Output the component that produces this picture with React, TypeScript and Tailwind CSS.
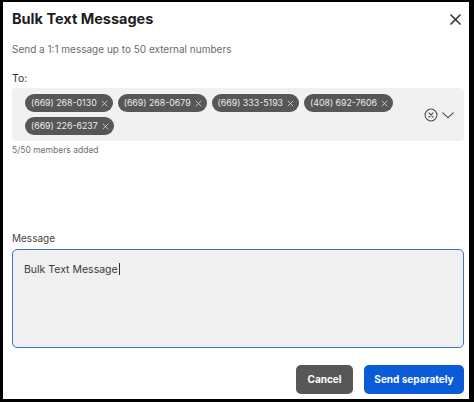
import React from "react";

const numbers = [
  "(669) 268-0130",
  "(669) 268-0679",
  "(669) 333-5193",
  "(408) 692-7606",
  "(669) 226-6237",
];

const Cross = ({ className }: { className?: string }) => (
  <svg className={className} viewBox="0 0 10 10" fill="none" stroke="currentColor" strokeWidth="1.2" strokeLinecap="round">
    <path d="M1.5 1.5l7 7M8.5 1.5l-7 7" />
  </svg>
);

const Chip = ({ label }: { label: string }) => (
  <span className="flex h-[18px] items-center gap-[4px] rounded-full bg-[#575757] pl-[6px] pr-[5px] text-[8.8px] leading-none text-[#ececec]">
    {label}
    <Cross className="size-[7px] text-[#d8d8d8]" />
  </span>
);

export default function App() {
  return (
    <div className="h-[402px] w-[474px] bg-black pb-[3px] pl-[3px] pr-[5px] pt-[2px] font-['Inter',sans-serif]">
      <div className="flex h-full w-full flex-col bg-white pl-[9px] pr-[5px] pt-[6px]">
        <div className="flex h-[22px] items-center justify-between">
          <h1 className="text-[14.5px] font-bold leading-[22px] text-[#1d1d1d]">Bulk Text Messages</h1>
          <Cross className="mr-[2px] size-[13px] text-[#333]" />
        </div>

        <p className="mt-[11px] text-[10px] leading-[16px] text-[#6b6b6b]">
          Send a 1:1 message up to 50 external numbers
        </p>

        <label className="mt-[14px] text-[10.5px] leading-[16px] text-[#333]">To:</label>
        <div className="mt-[1px] flex items-center rounded-[4px] bg-[#f1f1f1] py-[6px] pl-[13px] pr-[9px]">
          <div className="flex flex-1 flex-wrap gap-x-[5px] gap-y-[5px]">
            {numbers.map((n) => (
              <Chip key={n} label={n} />
            ))}
          </div>
          <div className="flex items-center gap-[3px] text-[#444]">
            <svg className="size-[14px]" viewBox="0 0 16 16" fill="none" stroke="currentColor" strokeWidth="1.2">
              <circle cx="8" cy="8" r="6.8" />
              <path d="M5.6 5.6l4.8 4.8M10.4 5.6l-4.8 4.8" strokeLinecap="round" />
            </svg>
            <svg className="size-[14px]" viewBox="0 0 16 16" fill="none" stroke="currentColor" strokeWidth="1.2" strokeLinecap="round" strokeLinejoin="round">
              <path d="M2 5.5l6 5.5 6-5.5" />
            </svg>
          </div>
        </div>
        <p className="mt-[3px] text-[8.5px] leading-[13px] text-[#707070]">5/50 members added</p>

        <label className="mt-[73px] text-[10px] leading-[16px] text-[#444]">Message</label>
        <div className="mt-[3px] h-[99px] rounded-[5px] border-[1.5px] border-[#3c72c6] bg-[#f0f0f0] px-[11px] pt-[5px]">
          <span className="text-[10.5px] leading-[16px] text-[#3a3a3a]">Bulk Text Message</span>
          <span className="ml-[1px] inline-block h-[12px] w-[1px] translate-y-[2px] bg-[#333]" />
        </div>

        <div className="mt-[17px] flex justify-end gap-[11px]">
          <button className="h-[29px] w-[57px] rounded-[5px] bg-[#575757] text-[10px] font-bold text-white">
            Cancel
          </button>
          <button className="h-[29px] w-[100px] rounded-[5px] bg-[#0b5bd9] text-[10px] font-bold text-white">
            Send separately
          </button>
        </div>
      </div>
    </div>
  );
}
